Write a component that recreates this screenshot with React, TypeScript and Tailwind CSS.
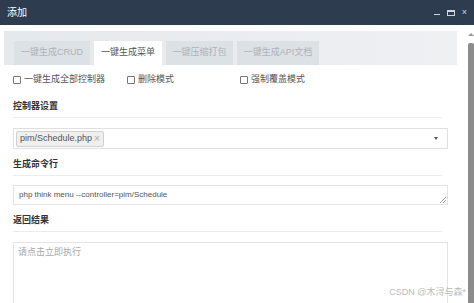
import React from "react";

const cn = '"Liberation Sans", "Noto Sans CJK SC", sans-serif';

function Checkbox({ label }: { label: string }) {
  return (
    <label className="flex items-center gap-[3px] text-[9px] text-[#555]">
      <span className="inline-block h-[8px] w-[8px] rounded-[1px] border border-[#777] bg-white" />
      {label}
    </label>
  );
}

function Section({ title }: { title: string }) {
  return (
    <div className="mr-[26px] border-b border-[#ececec] pb-[4px]">
      <div className="text-[9px] font-bold leading-[14px] text-[#333]">{title}</div>
    </div>
  );
}

export default function App() {
  const tabs = [
    { t: "一键生成CRUD", w: "w-[76px]" },
    { t: "一键生成菜单", w: "w-[68px]" },
    { t: "一键压缩打包", w: "w-[67px]" },
    { t: "一键生成API文档", w: "w-[82px]" },
  ];
  return (
    <div className="relative h-[303px] w-[474px] overflow-hidden bg-white" style={{ fontFamily: cn }}>
      <div className="flex h-[25px] items-center justify-between bg-[#2d3d4f] pl-[7px] pr-[7px]">
        <span className="text-[10px] text-white">添加</span>
        <div className="flex items-center gap-[7px] text-white">
          <span className="mt-[3px] h-[1px] w-[6px] bg-[#cfd6dd]" />
          <span className="h-[6px] w-[8px] border border-[#cfd6dd] border-t-2" />
          <span className="text-[9px] leading-none text-[#cfd6dd]">×</span>
        </div>
      </div>

      <div className="flex">
        <div className="w-[468px]">
          <div className="ml-[4px] mr-[11px] mt-[6px] flex h-[34px] items-end gap-[4px] bg-gradient-to-r from-[#e6e9ec] to-[#eef0f2] pl-[10px]">
            {tabs.map((x, i) => (
              <div
                key={x.t}
                className={
                  "flex h-[24px] items-center justify-center text-[9px] " +
                  x.w +
                  " " +
                  (i === 1 ? "bg-white text-[#555]" : "bg-[#dce1e5] text-[#aeb3b8]")
                }
              >
                {x.t}
              </div>
            ))}
          </div>

          <div className="pl-[13px]">
            <div className="mt-[9px] flex h-[12px] items-center">
              <div className="w-[114px]"><Checkbox label="一键生成全部控制器" /></div>
              <div className="w-[113px]"><Checkbox label="删除模式" /></div>
              <Checkbox label="强制覆盖模式" />
            </div>

            <div className="mt-[13px]"><Section title="控制器设置" /></div>
            <div className="mr-[20px] mt-[10px] flex h-[21px] items-center justify-between border border-[#e0e0e0] pl-[2px] pr-[9px]">
              <span className="flex h-[16px] items-center gap-[2px] rounded-[2px] border border-[#d0d0d0] bg-[#efefef] px-[3px] text-[9px] text-[#555]">
                pim/Schedule.php <span className="text-[10px] text-[#aaa]">×</span>
              </span>
              <span className="h-0 w-0 border-x-[2px] border-t-[3px] border-x-transparent border-t-[#555]" />
            </div>

            <div className="mt-[8px]"><Section title="生成命令行" /></div>
            <div className="relative mr-[20px] mt-[9px] flex h-[20px] items-center border border-[#e4e4e4] pl-[5px] text-[8px] text-[#555]">
              php think menu --controller=pim/Schedule
              <svg className="absolute bottom-[1px] right-[1px]" width="6" height="6" viewBox="0 0 6 6">
                <path d="M6 0 L0 6 M6 3 L3 6" stroke="#888" strokeWidth="0.8" />
              </svg>
            </div>

            <div className="mt-[8px]"><Section title="返回结果" /></div>
            <div className="relative mr-[20px] mt-[10px] h-[70px] border border-[#e4e4e4] pl-[4px] pt-[3px] text-[9px] text-[#aaa]">
              请点击立即执行
            </div>
          </div>
        </div>

        <div className="relative mt-[6px] w-[6px]">
          <div className="mx-auto mt-[2px] h-0 w-0 border-x-[3px] border-b-[3px] border-x-transparent border-b-[#999]" />
          <div className="mt-[7px] h-[270px] w-[6px] rounded-t-[2px] bg-[#8c8c8c]" />
        </div>
      </div>

      <div className="absolute bottom-[4px] right-[8px] text-[9px] text-[#bbb]">CSDN @木浔与森*</div>
    </div>
  );
}
